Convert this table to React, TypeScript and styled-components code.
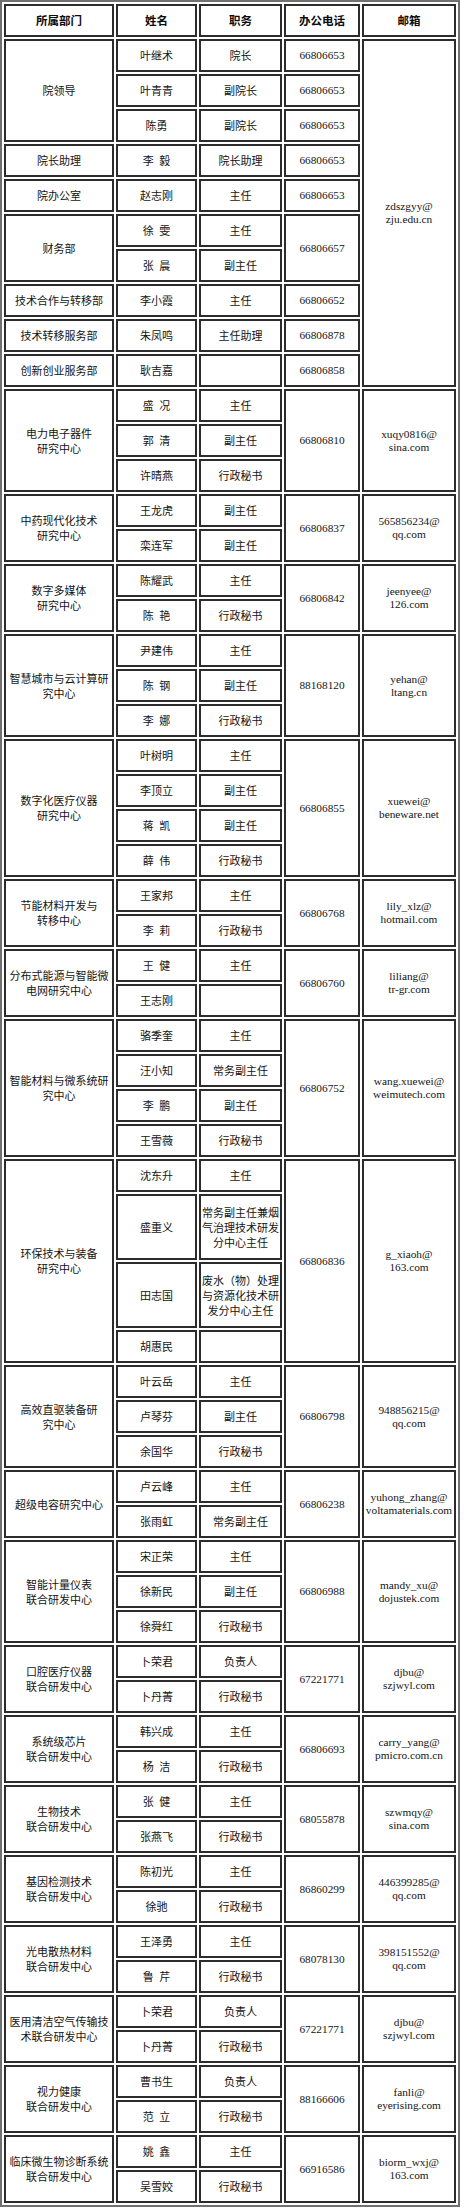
import styled, { createGlobalStyle, css } from 'styled-components';

const GlobalStyle = createGlobalStyle`
  * { box-sizing: border-box; }
  body {
    margin: 0;
    background: #fff;
  }
`;

type Member = { name: string; title: string[]; tall?: boolean };

type Group = {
  dept: string[];
  members: Member[];
  phone?: string;
  splitPhone?: boolean;
  email?: string[];
  emailSpan?: number;
};

// names like "李 毅" are written with a wider gap in the source table
const m = (name: string, title = '', tall = false): Member => ({
  name: name.replace(' ', '\u2002'),
  title: title ? title.split('|') : [],
  tall,
});

const groups: Group[] = [
  {
    dept: ['院领导'],
    members: [m('叶继术', '院长'), m('叶青青', '副院长'), m('陈勇', '副院长')],
    phone: '66806653',
    splitPhone: true,
    email: ['zdszgyy@', 'zju.edu.cn'],
    emailSpan: 10,
  },
  { dept: ['院长助理'], members: [m('李 毅', '院长助理')], phone: '66806653' },
  { dept: ['院办公室'], members: [m('赵志刚', '主任')], phone: '66806653' },
  { dept: ['财务部'], members: [m('徐 雯', '主任'), m('张 晨', '副主任')], phone: '66806657' },
  { dept: ['技术合作与转移部'], members: [m('李小霞', '主任')], phone: '66806652' },
  { dept: ['技术转移服务部'], members: [m('朱凤鸣', '主任助理')], phone: '66806878' },
  { dept: ['创新创业服务部'], members: [m('耿吉嘉')], phone: '66806858' },
  {
    dept: ['电力电子器件', '研究中心'],
    members: [m('盛 况', '主任'), m('郭 清', '副主任'), m('许晴燕', '行政秘书')],
    phone: '66806810',
    email: ['xuqy0816@', 'sina.com'],
  },
  {
    dept: ['中药现代化技术', '研究中心'],
    members: [m('王龙虎', '副主任'), m('栾连军', '副主任')],
    phone: '66806837',
    email: ['565856234@', 'qq.com'],
  },
  {
    dept: ['数字多媒体', '研究中心'],
    members: [m('陈耀武', '主任'), m('陈 艳', '行政秘书')],
    phone: '66806842',
    email: ['jeenyee@', '126.com'],
  },
  {
    dept: ['智慧城市与云计算研', '究中心'],
    members: [m('尹建伟', '主任'), m('陈 钢', '副主任'), m('李 娜', '行政秘书')],
    phone: '88168120',
    email: ['yehan@', 'ltang.cn'],
  },
  {
    dept: ['数字化医疗仪器', '研究中心'],
    members: [m('叶树明', '主任'), m('李顶立', '副主任'), m('蒋 凯', '副主任'), m('薛 伟', '行政秘书')],
    phone: '66806855',
    email: ['xuewei@', 'beneware.net'],
  },
  {
    dept: ['节能材料开发与', '转移中心'],
    members: [m('王家邦', '主任'), m('李 莉', '行政秘书')],
    phone: '66806768',
    email: ['lily_xlz@', 'hotmail.com'],
  },
  {
    dept: ['分布式能源与智能微', '电网研究中心'],
    members: [m('王 健', '主任'), m('王志刚')],
    phone: '66806760',
    email: ['liliang@', 'tr-gr.com'],
  },
  {
    dept: ['智能材料与微系统研', '究中心'],
    members: [m('骆季奎', '主任'), m('汪小知', '常务副主任'), m('李 鹏', '副主任'), m('王雪薇', '行政秘书')],
    phone: '66806752',
    email: ['wang.xuewei@', 'weimutech.com'],
  },
  {
    dept: ['环保技术与装备', '研究中心'],
    members: [
      m('沈东升', '主任'),
      m('盛重义', '常务副主任兼烟|气治理技术研发|分中心主任', true),
      m('田志国', '废水（物）处理|与资源化技术研|发分中心主任', true),
      m('胡惠民'),
    ],
    phone: '66806836',
    email: ['g_xiaoh@', '163.com'],
  },
  {
    dept: ['高效直驱装备研', '究中心'],
    members: [m('叶云岳', '主任'), m('卢琴芬', '副主任'), m('余国华', '行政秘书')],
    phone: '66806798',
    email: ['948856215@', 'qq.com'],
  },
  {
    dept: ['超级电容研究中心'],
    members: [m('卢云峰', '主任'), m('张雨虹', '常务副主任')],
    phone: '66806238',
    email: ['yuhong_zhang@', 'voltamaterials.com'],
  },
  {
    dept: ['智能计量仪表', '联合研发中心'],
    members: [m('宋正荣', '主任'), m('徐新民', '副主任'), m('徐舜红', '行政秘书')],
    phone: '66806988',
    email: ['mandy_xu@', 'dojustek.com'],
  },
  {
    dept: ['口腔医疗仪器', '联合研发中心'],
    members: [m('卜荣君', '负责人'), m('卜丹菁', '行政秘书')],
    phone: '67221771',
    email: ['djbu@', 'szjwyl.com'],
  },
  {
    dept: ['系统级芯片', '联合研发中心'],
    members: [m('韩兴成', '主任'), m('杨 洁', '行政秘书')],
    phone: '66806693',
    email: ['carry_yang@', 'pmicro.com.cn'],
  },
  {
    dept: ['生物技术', '联合研发中心'],
    members: [m('张 健', '主任'), m('张燕飞', '行政秘书')],
    phone: '68055878',
    email: ['szwmqy@', 'sina.com'],
  },
  {
    dept: ['基因检测技术', '联合研发中心'],
    members: [m('陈初光', '主任'), m('徐驰', '行政秘书')],
    phone: '86860299',
    email: ['446399285@', 'qq.com'],
  },
  {
    dept: ['光电散热材料', '联合研发中心'],
    members: [m('王泽勇', '主任'), m('鲁 芹', '行政秘书')],
    phone: '68078130',
    email: ['398151552@', 'qq.com'],
  },
  {
    dept: ['医用清洁空气传输技', '术联合研发中心'],
    members: [m('卜荣君', '负责人'), m('卜丹菁', '行政秘书')],
    phone: '67221771',
    email: ['djbu@', 'szjwyl.com'],
  },
  {
    dept: ['视力健康', '联合研发中心'],
    members: [m('曹书生', '负责人'), m('范 立', '行政秘书')],
    phone: '88166606',
    email: ['fanli@', 'eyerising.com'],
  },
  {
    dept: ['临床微生物诊断系统', '联合研发中心'],
    members: [m('姚 鑫', '主任'), m('吴雪姣', '行政秘书')],
    phone: '66916586',
    email: ['biorm_wxj@', '163.com'],
  },
];

const Page = styled.div`
  width: 474px;
  background: #fff;
`;

const Table = styled.table`
  width: 460px;
  table-layout: fixed;
  border-collapse: separate;
  border-spacing: 2px;
  border: 2px solid #707070;
  background: #fff;
`;

const cellBase = css`
  border: 2px solid #2c2c2c;
  padding: 0 1px;
  text-align: center;
  vertical-align: middle;
  color: #141414;
  overflow: hidden;
  white-space: nowrap;
`;

const cjk = css`
  font-family: "Noto Sans CJK SC", "Noto Sans", sans-serif;
  font-size: 11px;
  line-height: 15px;
`;

const serif = css`
  font-family: "Liberation Serif", "Times New Roman", serif;
  font-size: 11.3px;
  line-height: 13px;
`;

const HeadCell = styled.th`
  ${cellBase}
  ${cjk}
  height: 33px;
  font-weight: 700;
  font-size: 11.5px;
  color: #0c0c0c;
`;

const DeptCell = styled.td`
  ${cellBase}
  ${cjk}
`;

const NameCell = styled.td<{ $tall?: boolean }>`
  ${cellBase}
  ${cjk}
  height: ${p => (p.$tall ? 66 : 33)}px;
`;

const TitleCell = styled.td`
  ${cellBase}
  ${cjk}
  padding: 0;
`;

const PhoneCell = styled.td`
  ${cellBase}
  ${serif}
`;

const MailCell = styled.td`
  ${cellBase}
  ${serif}
`;

function Lines({ items }: { items: string[] }) {
  return (
    <>
      {items.map((t, i) => (
        <span key={i}>
          {i > 0 && <br />}
          {t}
        </span>
      ))}
    </>
  );
}

function GroupRows({ g }: { g: Group }) {
  const span = g.members.length;
  return (
    <>
      {g.members.map((mem, i) => (
        <tr key={i}>
          {i === 0 && (
            <DeptCell rowSpan={span}>
              <Lines items={g.dept} />
            </DeptCell>
          )}
          <NameCell $tall={mem.tall}>{mem.name}</NameCell>
          <TitleCell>
            <Lines items={mem.title} />
          </TitleCell>
          {g.splitPhone ? (
            <PhoneCell>{g.phone}</PhoneCell>
          ) : (
            i === 0 && <PhoneCell rowSpan={span}>{g.phone}</PhoneCell>
          )}
          {i === 0 && g.email && (
            <MailCell rowSpan={g.emailSpan ?? span}>
              <Lines items={g.email} />
            </MailCell>
          )}
        </tr>
      ))}
    </>
  );
}

export default function App() {
  return (
    <Page>
      <GlobalStyle />
      <Table>
        <colgroup>
          <col style={{ width: 110 }} />
          <col style={{ width: 81 }} />
          <col style={{ width: 83 }} />
          <col style={{ width: 76 }} />
          <col style={{ width: 94 }} />
        </colgroup>
        <thead>
          <tr>
            <HeadCell>所属部门</HeadCell>
            <HeadCell>姓名</HeadCell>
            <HeadCell>职务</HeadCell>
            <HeadCell>办公电话</HeadCell>
            <HeadCell>邮箱</HeadCell>
          </tr>
        </thead>
        <tbody>
          {groups.map((g, i) => (
            <GroupRows key={i} g={g} />
          ))}
        </tbody>
      </Table>
    </Page>
  );
}
